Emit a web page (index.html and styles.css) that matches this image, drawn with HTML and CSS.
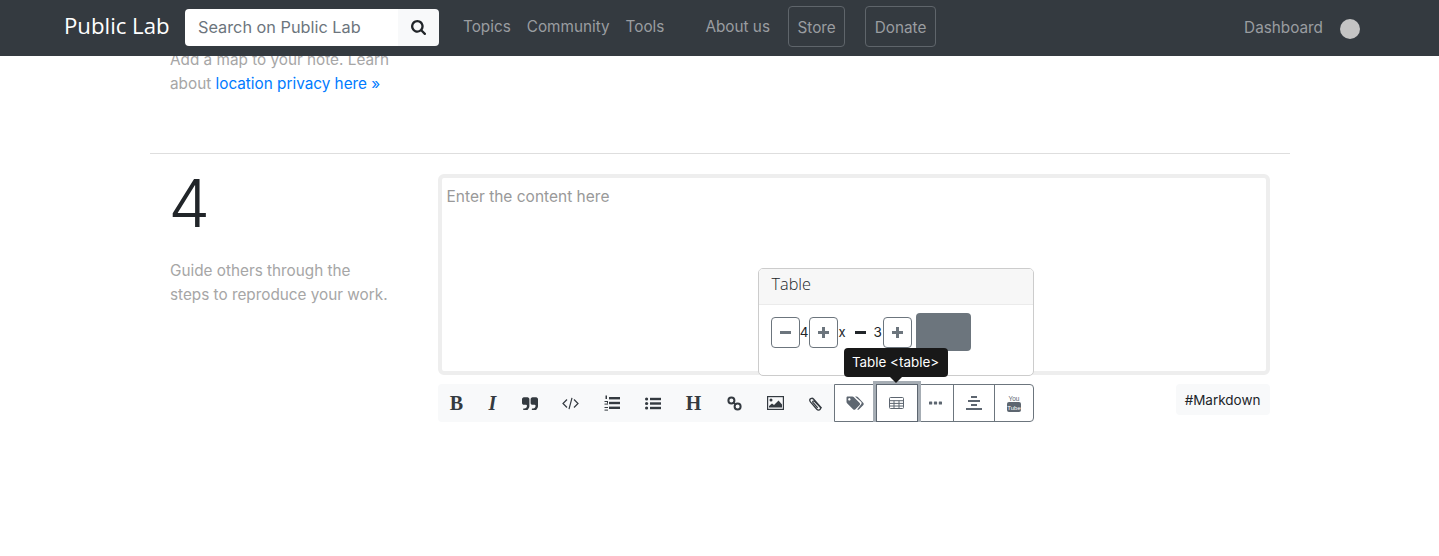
FILE: index.html
```html
<!DOCTYPE html>
<html lang="en">
<head>
    <meta charset="UTF-8">
    <meta name="viewport" content="width=device-width, initial-scale=1.0">
    <title>Public Lab</title>
    <link rel="stylesheet" href="styles.css">
</head>
<body>
    <nav class="navbar">
        <a class="brand" href="#">Public Lab</a>
        <form class="search">
            <div class="search-input">Search on Public Lab</div>
            <div class="search-btn">
                <svg width="15" height="15" viewBox="0 0 1664 1664"><path fill="#212529" d="M1152 704q0-185-131.5-316.5t-316.5-131.5-316.5 131.5-131.5 316.5 131.5 316.5 316.5 131.5 316.5-131.5 131.5-316.5zm512 832q0 52-38 90t-90 38q-54 0-90-38l-343-342q-179 124-399 124-143 0-273.5-55.5t-225-150-150-225-55.5-273.5 55.5-273.5 150-225 225-150 273.5-55.5 273.5 55.5 225 150 150 225 55.5 273.5q0 220-124 399l343 343q37 37 37 90z"/></svg>
            </div>
        </form>
        <a class="nav-link topics" href="#">Topics</a>
        <a class="nav-link community" href="#">Community</a>
        <a class="nav-link tools" href="#">Tools</a>
        <a class="nav-link about" href="#">About us</a>
        <a class="nav-btn store" href="#">Store</a>
        <a class="nav-btn donate" href="#">Donate</a>
        <a class="nav-link dashboard" href="#">Dashboard</a>
        <span class="avatar"></span>
    </nav>

    <div class="container">
        <p class="map-note"><span>Add a map to your note. Learn</span><br><span>about</span> <a href="#">location privacy here »</a></p>
        <hr class="divider">

        <div class="step">
            <div class="step-info">
                <div class="step-num">4</div>
                <p class="step-text">Guide others through the steps to reproduce your work.</p>
            </div>
            <div class="step-main">
                <div class="editor">Enter the content here</div>

                <div class="toolbar-row">
                    <div class="toolbar">
                        <div class="tools-plain">
                            <span class="tool letter bold">B</span>
                            <span class="tool letter ital">I</span>
                            <span class="tool">
                                <svg width="16" height="13" viewBox="0 128 1664 1280"><path fill="#343a40" d="M768 320v704q0 104-40.5 198.5t-109.5 163.5-163.5 109.5-198.5 40.5h-64q-26 0-45-19t-19-45v-128q0-26 19-45t45-19h64q106 0 181-75t75-181v-32q0-40-28-68t-68-28h-224q-80 0-136-56t-56-136v-384q0-80 56-136t136-56h384q80 0 136 56t56 136zm896 0v704q0 104-40.5 198.5t-109.5 163.5-163.5 109.5-198.5 40.5h-64q-26 0-45-19t-19-45v-128q0-26 19-45t45-19h64q106 0 181-75t75-181v-32q0-40-28-68t-68-28h-224q-80 0-136-56t-56-136v-384q0-80 56-136t136-56h384q80 0 136 56t56 136z"/></svg>
                            </span>
                            <span class="tool">
                                <svg width="17" height="13" viewBox="0 0 17 13" fill="none" stroke="#343a40" stroke-width="1.2"><path d="M5 2.5 1 6.5l4 4M12 2.5l4 4-4 4M10 .8 7 12.2"/></svg>
                            </span>
                            <span class="tool">
                                <svg width="16" height="16" viewBox="0 0 16 16" fill="#343a40"><rect x="5" y="2" width="11" height="2.4"/><rect x="5" y="6.8" width="11" height="2.4"/><rect x="5" y="11.6" width="11" height="2.4"/><rect x="1.5" y="0.5" width="1.5" height="3.5"/><rect x="0.5" y="6" width="3.5" height="1"/><rect x="0.5" y="8.6" width="3.5" height="1"/><rect x="3" y="7" width="1" height="1.6"/><rect x="0.5" y="12" width="3.5" height="1"/><rect x="0.5" y="14.6" width="3.5" height="1"/></svg>
                            </span>
                            <span class="tool">
                                <svg width="16" height="13" viewBox="0 0 16 13" fill="#343a40"><circle cx="1.6" cy="2" r="1.6"/><circle cx="1.6" cy="6.5" r="1.6"/><circle cx="1.6" cy="11" r="1.6"/><rect x="5" y="0.8" width="11" height="2.4"/><rect x="5" y="5.3" width="11" height="2.4"/><rect x="5" y="9.8" width="11" height="2.4"/></svg>
                            </span>
                            <span class="tool letter head">H</span>
                            <span class="tool">
                                <svg width="15" height="15" viewBox="0 0 15 15" fill="none" stroke="#343a40" stroke-width="2"><circle cx="4.4" cy="4.4" r="3"/><circle cx="10.6" cy="10.6" r="3"/><path d="M6 6l3 3" stroke-width="1.5"/></svg>
                            </span>
                            <span class="tool">
                                <svg width="17" height="14" viewBox="0 0 17 14"><rect x=".6" y=".6" width="15.8" height="12.8" fill="none" stroke="#343a40" stroke-width="1.2"/><circle cx="4" cy="4" r="1.5" fill="#343a40"/><path fill="#343a40" d="M2 11.5V10l3-2.5 2 1.5 4.5-4.5L15 8.5v3z"/></svg>
                            </span>
                            <span class="tool">
                                <svg width="14" height="15" viewBox="0 0 14 15" fill="none" stroke="#343a40" stroke-width="1.3"><path d="M12.6 12.2 4.7 3.2C3.5 1.8 1.8 2.2 1.2 3c-.6.8-.6 2 .4 3.1l6.2 7.1c1 1.1 2.5 1 3.2.3.8-.7.7-1.8-.1-2.7L5.5 5.3c-.5-.5-1.1-.5-1.5-.1-.4.4-.3 1 .1 1.5l4.6 5.2"/></svg>
                            </span>
                        </div>
                        <div class="tools-group">
                            <span class="gtool g-tag">
                                <svg width="18" height="15" viewBox="0 0 18 15"><path fill="#5d6670" d="M.5 1.8C.5 1 1 .5 1.8.5h4.6c.5 0 1 .2 1.3.5l6 6c.5.6.5 1.3 0 1.9l-4.5 4.5c-.6.5-1.3.5-1.9 0l-6-6c-.4-.4-.8-1-.8-1.5zM3.3 2.1a1.2 1.2 0 1 0 .1 0z"/><path fill="#5d6670" d="M9 .5h1.500c.5 0 1 .2 1.300.5l5.600 6c.5.6.5 1.300 0 1.900l-4.500 4.500c-.5.5-1.100.5-1.700.2L15.300 8c.5-.6.5-1.300 0-1.900z"/></svg>
                            </span>
                            <span class="gtool g-table">
                                <svg width="15" height="12" viewBox="0 0 15 12" fill="none" stroke="#5d6670" stroke-width="1"><rect x=".5" y=".5" width="14" height="11" rx="1"/><path d="M.5 3.7h14M.5 6.4h14M.5 9h14M5 3.7V11.5M10 3.7V11.5"/></svg>
                            </span>
                            <span class="gtool g-more">
                                <svg width="13" height="4" viewBox="0 0 13 4" fill="#5d6670"><rect y=".5" width="3.2" height="3" rx=".6"/><rect x="4.9" y=".5" width="3.2" height="3" rx=".6"/><rect x="9.8" y=".5" width="3.2" height="3" rx=".6"/></svg>
                            </span>
                            <span class="gtool g-hr">
                                <svg width="16" height="14" viewBox="0 0 16 14" fill="#5d6670"><rect x="5" y="0" width="6" height="2"/><rect x="2" y="4" width="12" height="2"/><rect x="5" y="8" width="6" height="2"/><rect x="0" y="12" width="16" height="2"/></svg>
                            </span>
                            <span class="gtool g-yt">
                                <svg width="14" height="17" viewBox="0 0 14 17"><text x="7" y="6" text-anchor="middle" class="yt-you">You</text><rect y="7" width="14" height="10" rx="2" fill="#5d6670"/><text x="7" y="14.5" text-anchor="middle" class="yt-tube">Tube</text></svg>
                            </span>
                        </div>
                    </div>
                    <span class="markdown-tag">#Markdown</span>

                    <div class="popover">
                        <div class="popover-head">Table</div>
                        <div class="popover-body">
                            <span class="btn-small"><i class="minus"></i></span>
                            <span class="num num-a">4</span>
                            <span class="btn-small"><i class="plus"></i></span>
                            <span class="times">x</span>
                            <span class="bare-minus"><i class="minus dark"></i></span>
                            <span class="num num-b">3</span>
                            <span class="btn-small"><i class="plus"></i></span>
                            <span class="btn-gray"></span>
                        </div>
                    </div>

                    <div class="tooltip">Table &lt;table&gt;</div>
                </div>
            </div>
        </div>
    </div>
</body>
</html>
```

FILE: styles.css
```css
* {
    box-sizing: border-box;
}
body {
    margin: 0;
    background: #fff;
    color: #212529;
    font-family: "Inter", "Liberation Sans", sans-serif;
    font-size: 16px;
    line-height: 24px;
}
a {
    text-decoration: none;
}

/* navbar stays on top, the page scrolls under it */
.navbar {
    position: fixed;
    top: 0;
    left: 0;
    right: 0;
    z-index: 10;
    height: 56px;
    background: #343a40;
    display: flex;
    align-items: center;
    padding-left: 64px;
}
.brand {
    width: 121px;
    color: #fff;
    font-family: "Open Sans", sans-serif;
    font-size: 22.2px;
    font-weight: 400;
    margin-top: -4px;
}
.search {
    width: 254px;
    height: 37px;
    margin: -1px 0 0 0;
    display: flex;
    border-radius: 4px;
    overflow: hidden;
}
.search-input {
    flex: 1;
    background: #fff;
    color: #6c757d;
    padding: 6px 13px;
    font-size: 16.3px;
}
.search-btn {
    width: 41px;
    background: #f8f9fa;
    display: flex;
    align-items: center;
    justify-content: center;
}
.nav-link {
    color: #9a9da0;
    font-size: 15.3px;
    margin-top: -2px;
}
.topics { margin-left: 24px; }
.community { margin-left: 16px; }
.tools { margin-left: 16px; }
.about { margin-left: 41px; }
.nav-btn {
    height: 41px;
    margin-top: -3px;
    border: 1px solid #5f656b;
    border-radius: 4px;
    color: #9a9da0;
    font-size: 15.3px;
    display: flex;
    align-items: center;
    padding: 2px 8.5px 0;
}
.store { margin-left: 18px; }
.donate { margin-left: 20px; }
.dashboard { margin-left: auto; margin-top: -1px; }
.avatar {
    width: 20px;
    height: 20px;
    border-radius: 50%;
    background: #c4c4c4;
    margin: 2px 79px 0 17px;
}

.container {
    width: 1140px;
    margin: 0 auto;
    padding-top: 48px;
}
.map-note {
    width: 240px;
    margin: 0 0 0 20.5px;
    color: #a6a6a6;
    font-size: 15.3px;
}
.map-note a {
    color: #007bff;
}
.divider {
    border: 0;
    border-top: 1px solid #dedede;
    margin: 57px 0 0;
}
.step {
    display: grid;
    grid-template-columns: 268px 832px;
    padding: 20px 20px 0;
}
.step-num {
    font-family: "Inter", sans-serif;
    font-weight: 300;
    font-size: 66px;
    line-height: 72px;
    margin: -7px 0 0 -1px;
    height: 71px;
}
.step-text {
    width: 222px;
    margin: 21px 0 0 .5px;
    color: #a6a6a6;
    font-size: 15.3px;
}
.editor {
    height: 201px;
    border: 4px solid #eee;
    border-radius: 6px;
    padding: 7px 5px;
    color: #999;
    font-size: 15.5px;
}

.toolbar-row {
    position: relative;
    display: flex;
    justify-content: space-between;
    align-items: flex-start;
    margin-top: 9px;
}
.toolbar {
    display: flex;
    height: 38px;
}
.tools-plain {
    width: 396px;
    background: #f8f9fa;
    border-radius: 4px 0 0 4px;
    display: flex;
}
.tool {
    flex: none;
    width: 40.9px;
    height: 38px;
    display: flex;
    align-items: center;
    justify-content: center;
}
.tool:first-child {
    width: 38px;
}
.tool:nth-child(2) {
    width: 34px;
}
.letter {
    font-family: "Liberation Serif", serif;
    font-size: 20px;
    color: #343a40;
}
.bold { font-weight: 700; }
.ital { font-weight: 700; font-style: italic; }
.head { font-weight: 700; font-size: 20px; }

.tools-group {
    display: flex;
    width: 200px;
    height: 38px;
    border: 1px solid #6c757d;
    border-radius: 0 4px 4px 0;
}
.gtool {
    display: flex;
    align-items: center;
    justify-content: center;
    border-right: 1px solid #6c757d;
    height: 36px;
}
.g-tag { width: 42px; }
.g-table {
    position: relative;
    z-index: 1;
    flex: none;
    width: 42px;
    height: 38px;
    margin: -1px 0 -1px -1px;
    border: 1px solid #5d6670;
    box-shadow: 0 0 0 3px #a6adb4;
}
.g-more { width: 36px; }
.g-hr { width: 41px; }
.g-yt {
    width: 38px;
    border-right: 0;
}
.yt-you {
    font-family: "Liberation Sans", sans-serif;
    font-size: 6.5px;
    fill: #5d6670;
}
.yt-tube {
    font-family: "Liberation Sans", sans-serif;
    font-size: 6px;
    fill: #fff;
}
.markdown-tag {
    background: #f8f9fa;
    border-radius: 4px;
    height: 31px;
    padding: 4px 9px;
    font-size: 13.5px;
}

.popover {
    position: absolute;
    z-index: 2;
    left: 320px;
    bottom: 46px;
    width: 276px;
    height: 108px;
    background: #fff;
    border: 1px solid #ccc;
    border-radius: 5px;
}
.popover-head {
    height: 36px;
    background: #f7f7f7;
    border-bottom: 1px solid #ebebeb;
    border-radius: 4px 4px 0 0;
    padding: 3px 13px;
    font-family: "Open Sans", sans-serif;
    font-weight: 300;
    font-size: 16.3px;
    color: #212529;
}
.popover-body {
    display: flex;
    align-items: flex-start;
    padding: 8px 0 0 12px;
    font-size: 13.5px;
}
.btn-small {
    width: 29px;
    height: 31px;
    margin-top: 4px;
    border: 1px solid #6c757d;
    border-radius: 4px;
    display: flex;
    align-items: center;
    justify-content: center;
}
.minus, .plus {
    display: block;
    position: relative;
    width: 11px;
    height: 3px;
    background: #6c757d;
}
.minus.dark {
    background: #212529;
}
.plus::after {
    content: "";
    position: absolute;
    left: 4px;
    top: -4px;
    width: 3px;
    height: 11px;
    background: #6c757d;
}
.num, .times {
    margin-top: 7px;
}
.num-a {
    width: 9px;
    text-align: center;
}
.times {
    width: 9px;
    text-align: center;
    font-size: 13px;
}
.bare-minus {
    width: 27px;
    height: 31px;
    margin-top: 4px;
    display: flex;
    align-items: center;
    justify-content: center;
}
.num-b {
    width: 8px;
    margin-right: 1px;
    text-align: center;
}
.btn-gray {
    width: 55px;
    height: 38px;
    margin-left: 4px;
    background: #6c757d;
    border-radius: 4px;
}

.tooltip {
    position: absolute;
    z-index: 3;
    left: 406px;
    bottom: 45px;
    width: 104px;
    height: 29px;
    background: #181818;
    color: #fff;
    border-radius: 4px;
    font-size: 13.4px;
    line-height: 29px;
    text-align: center;
}
.tooltip::after {
    content: "";
    position: absolute;
    left: 46px;
    top: 29px;
    border-style: solid;
    border-width: 6px 6px 0;
    border-color: #181818 transparent transparent;
}
```
